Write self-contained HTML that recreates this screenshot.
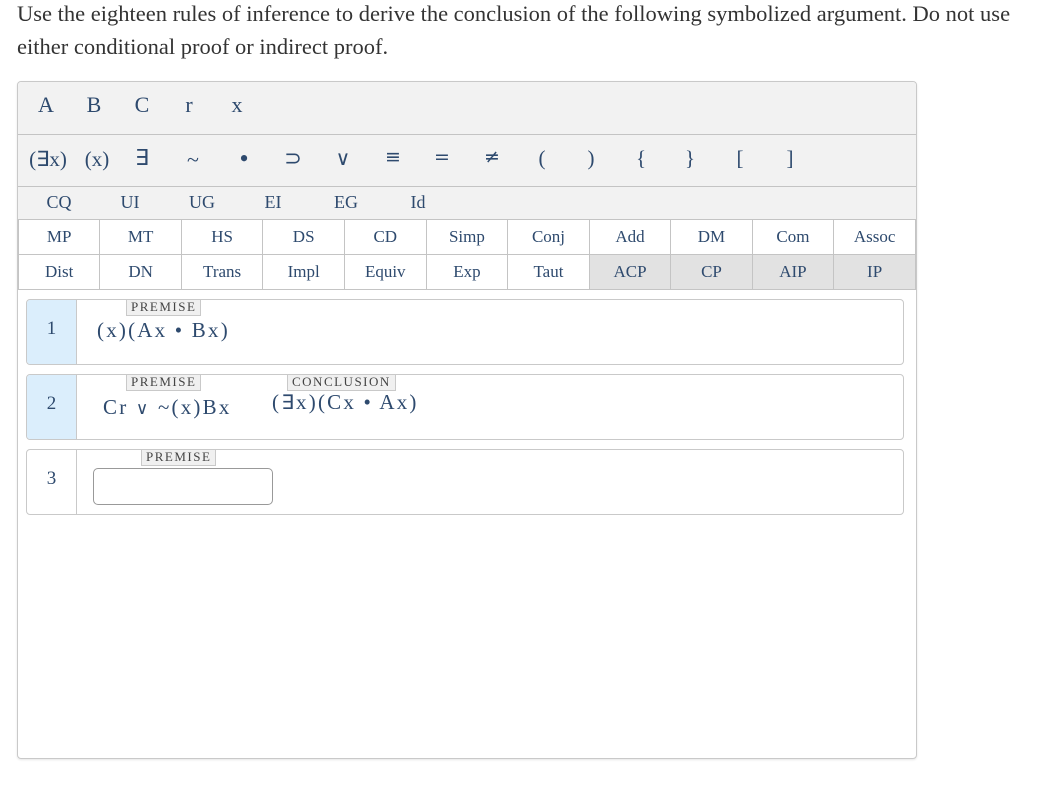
<!DOCTYPE html>
<html><head><meta charset="utf-8"><style>
body{margin:0;width:1042px;height:810px;background:#fff;font-family:"Liberation Serif",serif;position:relative;overflow:hidden}
.a{position:absolute}
.p{left:17px;top:-3px;font-size:22.5px;color:#333;line-height:33px;white-space:nowrap}
.box{left:17px;top:81px;width:898px;height:676px;border:1px solid #c9c9c9;border-radius:4px;background:#fff;box-shadow:0 1px 2px rgba(0,0,0,.1)}
.bar{left:18px;width:898px;background:#f2f2f2;border-bottom:1px solid #c4c4c4}
.t{color:#2e4a6e;font-size:19px;transform:translateX(-50%);white-space:nowrap}
.grid{left:18px;top:219px;border-collapse:collapse;width:898px}
.grid td{width:81.6px;height:34px;border:1px solid #c4c4c4;text-align:center;color:#2e4a6e;font-size:17px;padding:0}
.grid td.g{background:#e2e2e2}
.ln{left:26px;width:876px;height:64px;border:1px solid #c9c9c9;border-radius:4px;background:#fff;overflow:hidden}
.num{position:absolute;left:0;top:0;width:49px;height:64px;border-right:1px solid #c9c9c9;text-align:center;line-height:58px;font-size:19px;color:#2e4a6e}
.bl{background:#dbeefc}
.tag{position:absolute;top:-1px;font-size:13px;letter-spacing:1.5px;color:#444;background:#f0f0f0;border:1px solid #c9c9c9;border-top:none;padding:0 4px;line-height:16px}
.f{position:absolute;font-family:"Liberation Serif",serif;font-size:21px;color:#2e4a6e;letter-spacing:2.2px;white-space:nowrap}
.d{font-family:"DejaVu Sans",sans-serif;font-size:17px}
</style></head><body>
<div class="a p">Use the eighteen rules of inference to derive the conclusion of the following symbolized argument. Do not use<br>either conditional proof or indirect proof.</div>
<div class="a box"></div>
<div class="a bar" style="top:82px;height:52px;border-radius:4px 4px 0 0"></div>
<div class="a bar" style="top:135px;height:51px"></div>
<div class="a bar" style="top:187px;height:32px;border-bottom:none"></div>
<div class="a t" style="left:46px;top:92px;font-size:22px">A</div>
<div class="a t" style="left:94px;top:92px;font-size:22px">B</div>
<div class="a t" style="left:142px;top:92px;font-size:22px">C</div>
<div class="a t" style="left:189px;top:92px;font-size:22px">r</div>
<div class="a t" style="left:237px;top:92px;font-size:22px">x</div>
<div class="a t" style="left:48px;top:147px;font-size:21px">(∃x)</div>
<div class="a t" style="left:97px;top:147px;font-size:21px">(x)</div>
<div class="a t" style="left:142px;top:146px;font-size:22px;font-family:'DejaVu Sans'">∃</div>
<div class="a t" style="left:193px;top:147px;font-size:22px">~</div>
<div class="a t" style="left:244px;top:144px;font-size:26px">•</div>
<div class="a t" style="left:293px;top:146px;font-family:'DejaVu Sans';font-size:21px">⊃</div>
<div class="a t" style="left:343px;top:146px;font-family:'DejaVu Sans';font-size:20px">∨</div>
<div class="a t" style="left:393px;top:146px;font-family:'DejaVu Sans';font-size:19px">≡</div>
<div class="a t" style="left:442px;top:146px;font-family:'DejaVu Sans';font-size:19px">=</div>
<div class="a t" style="left:492px;top:146px;font-family:'DejaVu Sans';font-size:19px">≠</div>
<div class="a t" style="left:542px;top:146px;font-size:21px">(</div>
<div class="a t" style="left:591px;top:146px;font-size:21px">)</div>
<div class="a t" style="left:641px;top:146px;font-size:21px">{</div>
<div class="a t" style="left:690px;top:146px;font-size:21px">}</div>
<div class="a t" style="left:740px;top:146px;font-size:21px">[</div>
<div class="a t" style="left:790px;top:146px;font-size:21px">]</div>
<div class="a t" style="left:59px;top:192px;font-size:18px">CQ</div>
<div class="a t" style="left:130px;top:192px;font-size:18px">UI</div>
<div class="a t" style="left:202px;top:192px;font-size:18px">UG</div>
<div class="a t" style="left:273px;top:192px;font-size:18px">EI</div>
<div class="a t" style="left:346px;top:192px;font-size:18px">EG</div>
<div class="a t" style="left:418px;top:192px;font-size:18px">Id</div>
<table class="a grid">
<tr><td>MP</td><td>MT</td><td>HS</td><td>DS</td><td>CD</td><td>Simp</td><td>Conj</td><td>Add</td><td>DM</td><td>Com</td><td>Assoc</td></tr>
<tr><td>Dist</td><td>DN</td><td>Trans</td><td>Impl</td><td>Equiv</td><td>Exp</td><td>Taut</td><td class="g">ACP</td><td class="g">CP</td><td class="g">AIP</td><td class="g">IP</td></tr>
</table>
<div class="a ln" style="top:299px"><div class="num bl">1</div><div class="tag" style="left:99px">PREMISE</div><div class="f" style="left:70px;top:18px">(x)(Ax • Bx)</div></div>
<div class="a ln" style="top:374px"><div class="num bl">2</div><div class="tag" style="left:99px">PREMISE</div><div class="f" style="left:76px;top:20px">Cr <span class="d">∨</span> ~(x)Bx</div><div class="tag" style="left:260px">CONCLUSION</div><div class="f" style="left:245px;top:15px">(<span class="d" style="font-size:20px">∃</span>x)(Cx • Ax)</div></div>
<div class="a ln" style="top:449px"><div class="num">3</div><div class="tag" style="left:114px">PREMISE</div><div style="position:absolute;left:66px;top:18px;width:178px;height:35px;border:1px solid #999;border-radius:5px"></div></div>
</body></html>
